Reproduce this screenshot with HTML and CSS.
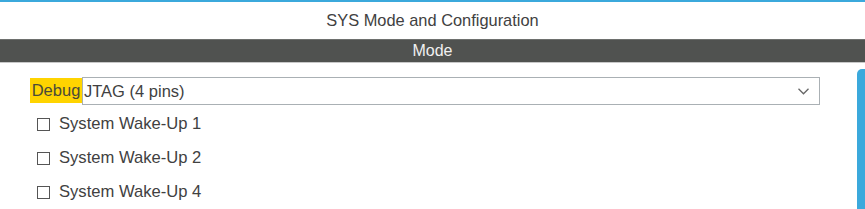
FILE: index.html
```html
<!DOCTYPE html>
<html lang="en">
<head>
    <meta charset="UTF-8">
    <title>SYS Mode and Configuration</title>
    <link rel="stylesheet" href="styles.css">
</head>
<body>
    <div class="panel">
        <div class="title">SYS Mode and Configuration</div>
        <div class="section-bar">Mode</div>

        <div class="content">
            <div class="rows">
                <div class="field">
                    <span class="label">Debug</span>
                    <div class="select">
                        <span>JTAG (4 pins)</span>
                        <svg class="chevron" width="11" height="7" viewBox="0 0 11 7">
                            <path d="M0.5 0.8 L5.5 5.8 L10.5 0.8" fill="none" stroke="#666" stroke-width="1.3"/>
                        </svg>
                    </div>
                </div>
                <label class="check"><span class="box"></span>System Wake-Up 1</label>
                <label class="check"><span class="box"></span>System Wake-Up 2</label>
                <label class="check"><span class="box"></span>System Wake-Up 4</label>
            </div>
            <div class="scrollbar"></div>
        </div>
    </div>
</body>
</html>
```

FILE: styles.css
```css
body {
    margin: 0;
    font-family: 'Liberation Sans', Arial, sans-serif;
    color: #414141;
    background: #fff;
}

.panel {
    width: 865px;
    height: 209px;
    border-top: 2px solid #3ba9dc;
    box-sizing: border-box;
    overflow: hidden;
}

.title {
    height: 37px;
    line-height: 36px;
    text-align: center;
    font-size: 16.4px;
}

.section-bar {
    height: 22px;
    line-height: 22px;
    background: #505250;
    border-top: 1px solid #6e706e;
    border-bottom: 1px solid #c8c8c8;
    color: #f0f0f0;
    text-align: center;
    font-size: 16px;
}

.content {
    display: flex;
    justify-content: space-between;
}

.rows {
    padding: 14px 0 0 30px;
}

.field {
    display: flex;
    height: 28px;
}

.label {
    background: #ffd400;
    width: 52px;
    line-height: 25px;
    height: 25px;
    margin-top: 1px;
    font-size: 16.5px;
    color: #4a4a3a;
    text-align: center;
}

.select {
    width: 738px;
    height: 28px;
    border: 1px solid #aab0b4;
    display: flex;
    align-items: center;
    justify-content: space-between;
    padding: 0 10px 0 1px;
    box-sizing: border-box;
    font-size: 16.5px;
}

.chevron {
    margin-top: 1px;
}

.check {
    display: flex;
    align-items: center;
    height: 34px;
    font-size: 16.6px;
    margin-left: 7px;
}

.check:first-of-type {
    margin-top: 2px;
}

.box {
    width: 11px;
    height: 11px;
    border: 1px solid #555;
    margin-right: 9px;
}

.scrollbar {
    width: 8px;
    height: 150px;
    margin-top: 6px;
    background: #3ba9dc;
    border-radius: 5px 0 0 0;
}
```
